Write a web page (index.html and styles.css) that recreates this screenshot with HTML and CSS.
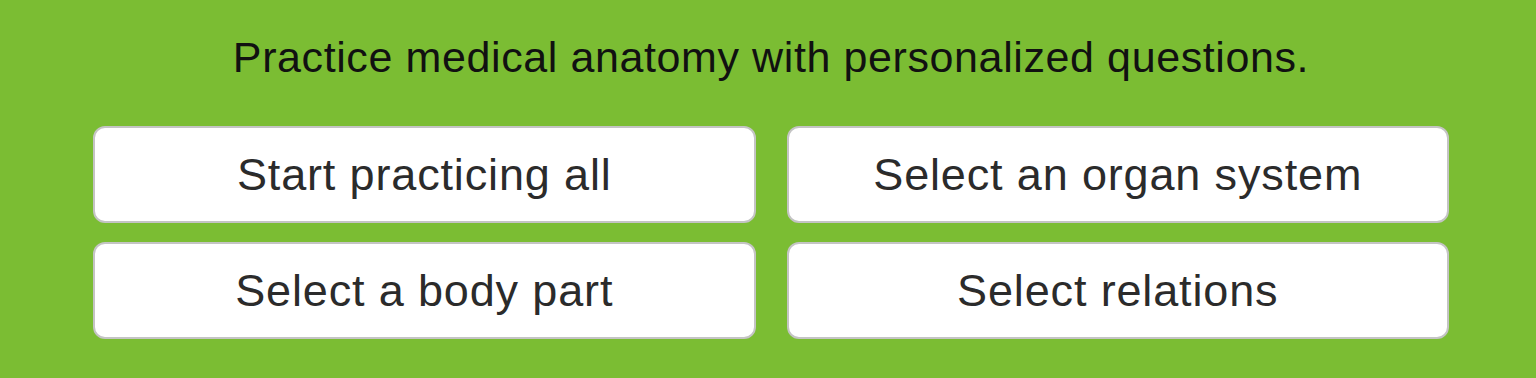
FILE: index.html
```html
<!DOCTYPE html>
<html lang="en">
<head>
    <meta charset="UTF-8">
    <meta name="viewport" content="width=device-width, initial-scale=1.0">
    <title>Anatomy Practice</title>
    <link rel="stylesheet" href="styles.css">
</head>
<body>

    <div class="intro">
        <p class="tagline">Practice medical anatomy with personalized questions.</p>

        <div class="choice-grid">
            <button class="choice">Start practicing all</button>
            <button class="choice">Select an organ system</button>
            <button class="choice">Select a body part</button>
            <button class="choice">Select relations</button>
        </div>
    </div>

</body>
</html>
```

FILE: styles.css
```css
:root {
    --green: #7bbd33;
    --ink: #2b2b2b;
}

body {
    font-family: 'Liberation Sans', Arial, Helvetica, sans-serif;
    background-color: var(--green);
    margin: 0;
    height: 378px;
    overflow: hidden;
}

.intro {
    width: 1356px;
    margin-left: 93px;
}

.tagline {
    margin: 0;
    padding-top: 33px;
    font-size: 43px;
    letter-spacing: 0.6px;
    line-height: 48px;
    text-align: center;
    color: #111;
}

/* Choice buttons */
.choice-grid {
    display: grid;
    grid-template-columns: 1fr 1fr;
    column-gap: 31px;
    row-gap: 19px;
    margin-top: 45px;
}

.choice {
    height: 97px;
    background: white;
    border: 2px solid #c4c4c4;
    border-radius: 12px;
    font-family: inherit;
    font-size: 45px;
    letter-spacing: 0.85px;
    color: var(--ink);
    cursor: pointer;
}
```
